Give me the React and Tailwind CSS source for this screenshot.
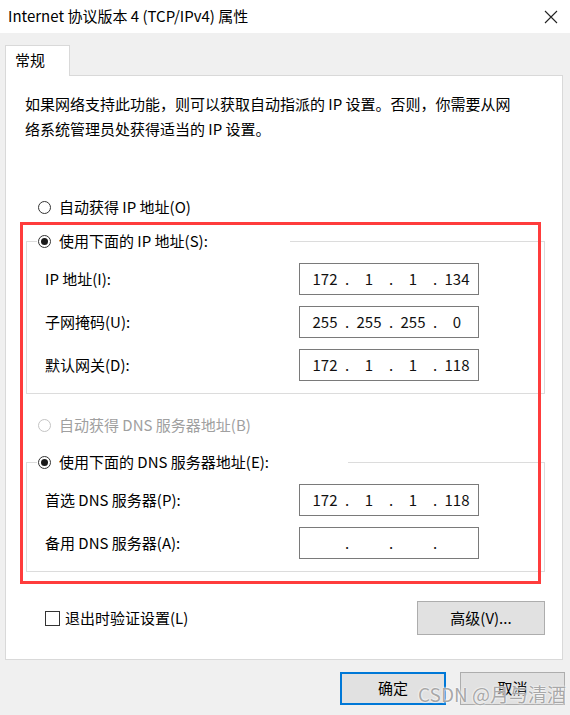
import React from 'react'

const font = { fontFamily: '"Noto Sans CJK SC", "Noto Sans", sans-serif' }

function Radio({ checked, disabled }) {
  return (
    <span
      className={`w-[13px] h-[13px] rounded-full border bg-white flex items-center justify-center shrink-0 ${
        disabled ? 'border-[#c4c4c4]' : 'border-[#333333]'
      }`}
    >
      {checked && <span className="w-[7px] h-[7px] rounded-full bg-[#1a1a1a]" />}
    </span>
  )
}

function IpBox({ parts }) {
  return (
    <div className="w-[180px] h-[32px] border border-[#7a7a7a] bg-white flex items-center pl-[7px] text-[15px] text-[#111]">
      {parts.map((p, i) => (
        <React.Fragment key={i}>
          <span className="w-[36px] text-center">{p}</span>
          {i < 3 && <span className="w-[8px] text-center">.</span>}
        </React.Fragment>
      ))}
    </div>
  )
}

function Row({ label, parts }) {
  return (
    <div className="flex items-center">
      <span className="w-[254px] text-[15px]">{label}</span>
      <IpBox parts={parts} />
    </div>
  )
}

function Group({ legend, legendWidth, children }) {
  return (
    <fieldset className="w-[519px] border border-[#dcdcdc] pl-[18px] pb-[12px]">
      <legend className={`-ml-[8px] pl-[1px] h-[20px] flex items-center gap-[8px] ${legendWidth}`}>
        <Radio checked />
        <span className="text-[15px]">{legend}</span>
      </legend>
      <div className="flex flex-col gap-[11px] pt-[12px]">{children}</div>
    </fieldset>
  )
}

export default function App() {
  return (
    <div className="relative w-[570px] h-[715px] bg-[#f0f0f0] text-black overflow-hidden" style={font}>
      <div className="h-[33px] bg-white flex items-center justify-between pl-[8px] pr-[10px]">
        <span className="text-[15px]">Internet 协议版本 4 (TCP/IPv4) 属性</span>
        <svg width="14" height="14" viewBox="0 0 14 14" className="mr-[2px]">
          <path d="M1 1L13 13M13 1L1 13" stroke="#222" strokeWidth="1.1" fill="none" />
        </svg>
      </div>

      <div className="pt-[12px] px-[5px]">
        <div className="relative z-10 -mb-px w-[65px] h-[31px] bg-white border border-b-0 border-[#d9d9d9] pl-[9px] pt-[3px] text-[15px]">
          常规
        </div>
        <div className="w-[558px] h-[585px] border border-[#d9d9d9] bg-white pl-[20px] pt-[15px]">
          <p className="text-[15px] leading-[25px] -ml-px">
            如果网络支持此功能，则可以获取自动指派的 IP 设置。否则，你需要从网
            <br />
            络系统管理员处获得适当的 IP 设置。
          </p>

          <div className="mt-[56px] ml-[12px] h-[20px] flex items-center gap-[8px]">
            <Radio />
            <span className="text-[15px]">自动获得 IP 地址(O)</span>
          </div>

          <div className="mt-[14px]">
            <Group legend="使用下面的 IP 地址(S):" legendWidth="w-[253px]">
              <Row label="IP 地址(I):" parts={['172', '1', '1', '134']} />
              <Row label="子网掩码(U):" parts={['255', '255', '255', '0']} />
              <Row label="默认网关(D):" parts={['172', '1', '1', '118']} />
            </Group>
          </div>

          <div className="mt-[21px] ml-[12px] h-[20px] flex items-center gap-[8px]">
            <Radio disabled />
            <span className="text-[15px] text-[#a0a0a0]">自动获得 DNS 服务器地址(B)</span>
          </div>

          <div className="mt-[17px]">
            <Group legend="使用下面的 DNS 服务器地址(E):" legendWidth="w-[311px]">
              <Row label="首选 DNS 服务器(P):" parts={['172', '1', '1', '118']} />
              <Row label="备用 DNS 服务器(A):" parts={['', '', '', '']} />
            </Group>
          </div>

          <div className="w-[519px] mt-[29px] flex items-center justify-between">
            <div className="ml-[19px] flex items-center gap-[5px]">
              <span className="w-[15px] h-[15px] border border-[#333] bg-white" />
              <span className="text-[15px]">退出时验证设置(L)</span>
            </div>
            <button className="w-[128px] h-[34px] bg-[#e1e1e1] border border-[#adadad] text-[15px]">
              高级(V)...
            </button>
          </div>
        </div>

        <div className="mt-[12px] flex justify-end gap-[14px]">
          <button className="w-[106px] h-[33px] bg-[#e1e1e1] border-2 border-[#0078d7] text-[15px]">
            确定
          </button>
          <button className="w-[105px] h-[33px] bg-[#e1e1e1] border border-[#adadad] text-[15px]">
            取消
          </button>
        </div>
      </div>

      <div className="absolute left-[20px] top-[222px] w-[521px] h-[362px] border-[3px] border-[#ff3c3c] pointer-events-none" />

      <div className="absolute left-[418px] top-[680px] text-[19px] text-[#a8a8a8] [text-shadow:0_0_2px_#fff,0_0_2px_#fff] pointer-events-none">
        CSDN @月与清酒
      </div>
    </div>
  )
}
